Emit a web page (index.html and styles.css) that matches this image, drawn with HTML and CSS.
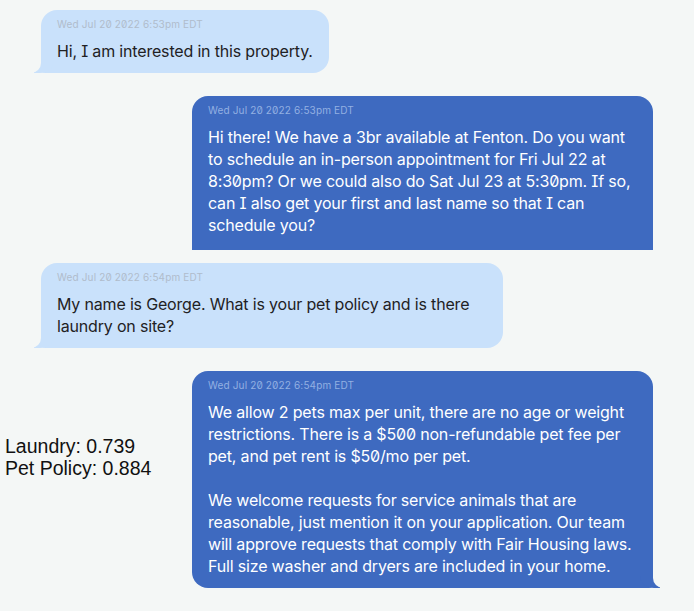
FILE: index.html
```html
<!DOCTYPE html>
<html lang="en">
<head>
<meta charset="utf-8">
<title>Conversation</title>
<link rel="stylesheet" href="styles.css">
</head>
<body>
<div class="chat">
  <div class="row row-in">
    <div class="bubble bubble-in tail-left">
      <div class="ts">Wed Jul 20 2022 6:53pm EDT</div>
      <div class="msg">Hi, I am interested in this property.</div>
    </div>
  </div>
  <div class="row row-out row-tight">
    <div class="bubble bubble-out bubble-cut">
      <div class="ts">Wed Jul 20 2022 6:53pm EDT</div>
      <div class="msg">Hi there! We have a 3br available at Fenton. Do you want to schedule an in-person appointment for Fri Jul 22 at 8:30pm? Or we could also do Sat Jul 23 at 5:30pm. If so, can I also get your first and last name so that I can schedule you?</div>
    </div>
  </div>
  <div class="row row-in">
    <div class="bubble bubble-in tail-left">
      <div class="ts">Wed Jul 20 2022 6:54pm EDT</div>
      <div class="msg">My name is George. What is your pet policy and is there laundry on site?</div>
    </div>
  </div>
  <div class="row row-note">
    <div class="note">
      <div>Laundry: 0.739</div>
      <div>Pet Policy: 0.884</div>
    </div>
    <div class="bubble bubble-out tail-right">
      <div class="ts">Wed Jul 20 2022 6:54pm EDT</div>
      <div class="msg">
        <p>We allow 2 pets max per unit, there are no age or weight restrictions. There is a $500 non-refundable pet fee per pet, and pet rent is $50/mo per pet.</p>
        <p class="para">We welcome requests for service animals that are reasonable, just mention it on your application. Our team will approve requests that comply with Fair Housing laws. Full size washer and dryers are included in your home.</p>
      </div>
    </div>
  </div>
</div>
</body>
</html>
```

FILE: styles.css
```css
html, body {
  margin: 0;
  padding: 0;
  background: #f4f7f6;
}

.chat {
  display: flex;
  flex-direction: column;
  padding-top: 10px;
  font-family: Inter, "Noto Sans", sans-serif;
  font-feature-settings: "cv08" 1, "zero" 1;
}

.row {
  display: flex;
  margin-bottom: 23px;
}

.row-tight {
  margin-bottom: 13px;
}

.row-in {
  justify-content: flex-start;
  padding-left: 41px;
}

.row-out {
  justify-content: flex-end;
  padding-right: 41px;
}

.row-note {
  justify-content: space-between;
  align-items: flex-start;
  padding-left: 5px;
  padding-right: 41px;
}

.bubble {
  position: relative;
  box-sizing: border-box;
  max-width: 462px;
  padding: 8px 16px 11px;
  border-radius: 16px;
}

.bubble-in {
  background: #c9e1fb;
  color: #1f2124;
}

.bubble-out {
  background: #3e6ac0;
  color: #ffffff;
  width: 461px;
}

.bubble-cut {
  border-radius: 16px 16px 0 0;
  padding-bottom: 14px;
}

.ts {
  font-size: 10px;
  line-height: 12px;
  margin-bottom: 10px;
  letter-spacing: 0.15px;
}

.bubble-in .ts {
  color: #b0bccb;
}

.bubble-out .ts {
  color: #93b0e2;
}

.msg {
  font-size: 16px;
  line-height: 22px;
  letter-spacing: -0.011em;
}

.msg p {
  margin: 0;
}

.msg .para {
  margin-top: 22px;
}

.note {
  margin-top: 64px;
  font-family: "Liberation Sans", Arial, sans-serif;
  font-size: 19.5px;
  line-height: 22px;
  color: #111111;
  font-feature-settings: normal;
}

/* message tails */
.tail-left {
  border-bottom-left-radius: 4px;
}

.tail-left::before {
  content: "";
  position: absolute;
  left: -7px;
  bottom: 0;
  width: 20px;
  height: 18px;
  background: #c9e1fb;
  border-bottom-right-radius: 14px 12px;
}

.tail-left::after {
  content: "";
  position: absolute;
  left: -10px;
  bottom: 0;
  width: 10px;
  height: 19px;
  background: #f4f7f6;
  border-bottom-right-radius: 10px;
}

.tail-right {
  border-bottom-right-radius: 4px;
}

.tail-right::before {
  content: "";
  position: absolute;
  right: -7px;
  bottom: 0;
  width: 20px;
  height: 18px;
  background: #3e6ac0;
  border-bottom-left-radius: 14px 12px;
}

.tail-right::after {
  content: "";
  position: absolute;
  right: -10px;
  bottom: 0;
  width: 10px;
  height: 19px;
  background: #f4f7f6;
  border-bottom-left-radius: 10px;
}
```
